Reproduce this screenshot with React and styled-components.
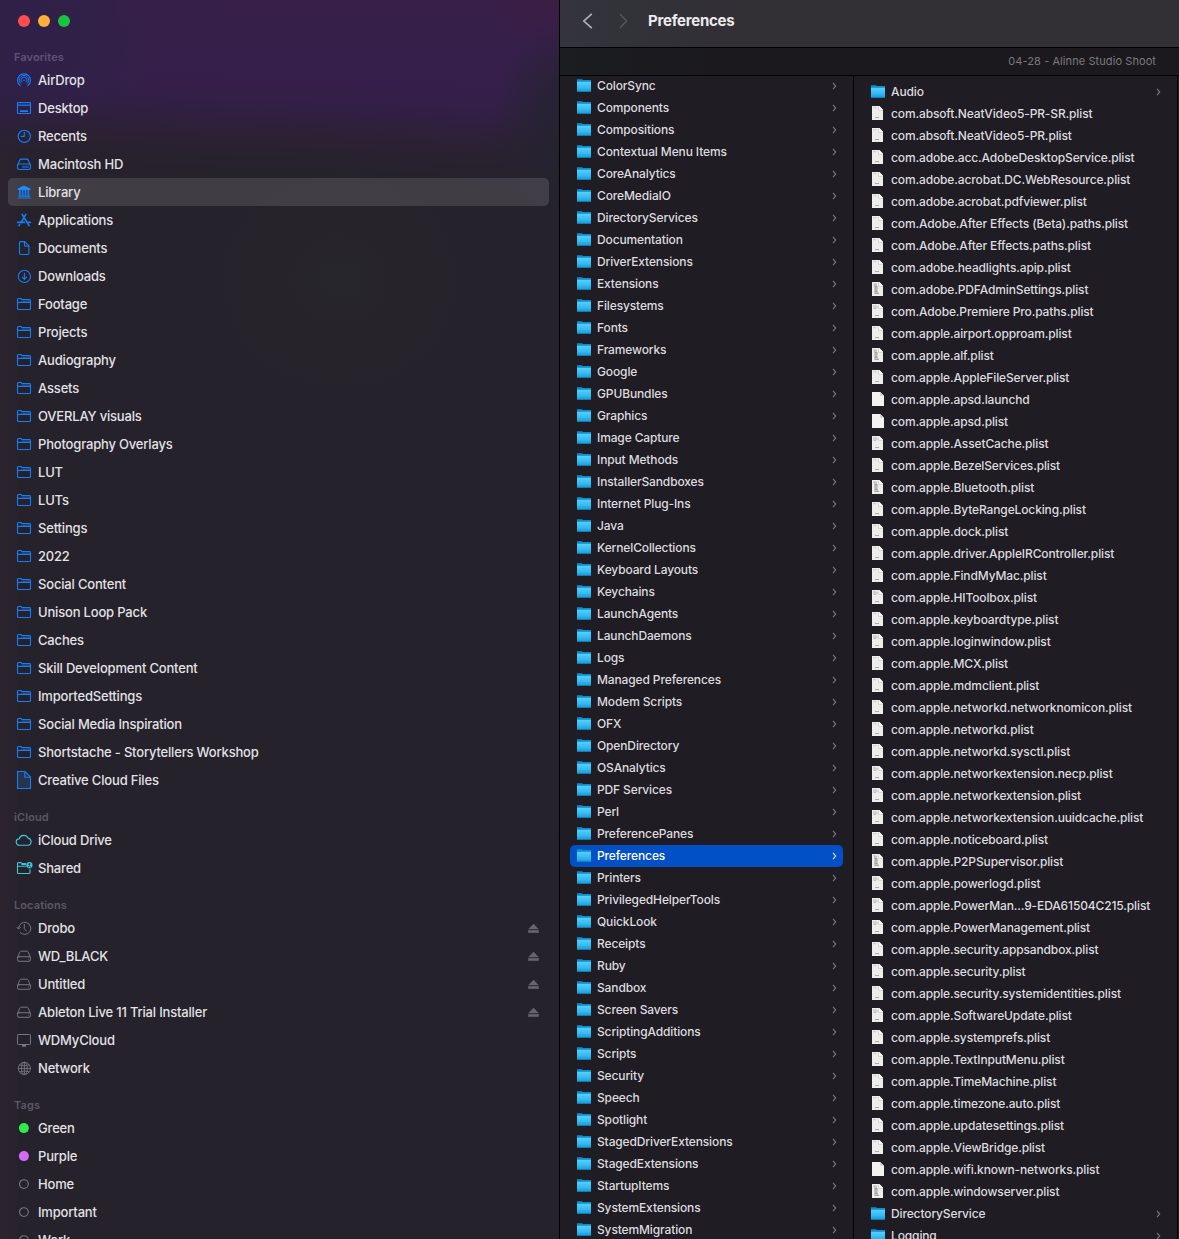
import React from "react";
import styled, { createGlobalStyle } from "styled-components";

const GlobalStyle = createGlobalStyle`
  * {
    box-sizing: border-box;
  }
  body {
    margin: 0;
    background-color: #1f1c24;
    font-family: Inter, "Liberation Sans", sans-serif;
    overflow: hidden;
  }
`;

const Window = styled.div`
  display: flex;
  width: 1179px;
  height: 1239px;
  overflow: hidden;
`;

const Sidebar = styled.div`
  width: 560px;
  height: 100%;
  flex-shrink: 0;
  overflow: hidden;
  border-right: 1px solid #000;
  background: radial-gradient(
      ellipse 85px 105px at 575px 125px,
      rgba(36, 35, 47, 0.95) 0%,
      rgba(36, 35, 47, 0.7) 45%,
      rgba(36, 35, 47, 0) 100%
    ),
    radial-gradient(
      ellipse 80px 50px at 559px 0,
      rgba(62, 29, 66, 0.8) 0%,
      rgba(62, 29, 66, 0) 100%
    ),
    radial-gradient(
      ellipse 170px 125px at 0 30px,
      rgba(43, 33, 70, 0.65) 0%,
      rgba(43, 33, 70, 0.5) 50%,
      rgba(43, 33, 70, 0) 100%
    ),
    linear-gradient(
      182deg,
      #371f49 0,
      #351f4a 95px,
      #321f45 118px,
      #2b2133 148px,
      rgba(38, 34, 43, 0) 185px
    ),
    radial-gradient(
      ellipse 120px 110px at 340px 280px,
      #27262c 0%,
      #26242a 60%,
      rgba(38, 36, 42, 0) 100%
    ),
    linear-gradient(to right, #2b232d 0, #2a232d 14px, #25222b 19px, #25222b 100%);
`;

const Lights = styled.div`
  display: flex;
  gap: 8px;
  height: 48px;
  padding: 15px 0 0 18px;
`;
const Light = styled.div`
  width: 12px;
  height: 12px;
  border-radius: 50%;
  background-color: ${(props) => props.color};
`;

const Section = styled.div`
  margin-bottom: 14px;
`;
const SectionTitle = styled.div`
  height: 18px;
  padding-left: 14px;
  line-height: 18px;
  font-size: 11px;
  font-weight: 600;
  letter-spacing: 0.1px;
  color: ${(props) => (props.$tinted ? "#62507a" : "#5b5862")};
`;
const SideRow = styled.div`
  display: flex;
  align-items: center;
  height: 28px;
  margin: 0 10px 0 8px;
  padding: 0 10px 0 8px;
  gap: 6px;
  border-radius: 5px;
  background-color: ${(props) =>
    props.$active ? "rgba(255, 255, 255, 0.125)" : "transparent"};
  color: ${(props) => props.$tone};

  svg {
    flex-shrink: 0;
    overflow: visible;
  }
`;
const SideLabel = styled.span`
  flex: 1;
  font-size: 13px;
  line-height: 16px;
  font-weight: 500;
  letter-spacing: -0.18px;
  color: #e3e1e5;
  white-space: nowrap;
`;

const Main = styled.div`
  display: flex;
  flex-direction: column;
  flex: 1;
  min-width: 0;
`;
const Toolbar = styled.div`
  display: flex;
  align-items: center;
  height: 48px;
  padding: 0 0 6px 22px;
  border-bottom: 1px solid #000;
  background: linear-gradient(to right, #33353d 0, #323239 60px, #322f35 190px);
`;
const NavButton = styled.div`
  width: ${(props) => props.$width}px;
  height: 16px;
  color: ${(props) => (props.$dim ? "#58565c" : "#b4b3b8")};
`;
const Title = styled.div`
  font-size: 15px;
  font-weight: 700;
  letter-spacing: -0.25px;
  color: #eceaed;
`;
const TabBar = styled.div`
  display: flex;
  align-items: center;
  justify-content: flex-end;
  height: 28px;
  padding: 0 23px 1px 0;
  border-bottom: 1px solid #000;
  background: linear-gradient(to right, #1b1d20 0, #1b191d 160px);
  font-size: 11px;
  letter-spacing: 0.08px;
  color: #7c7a7e;
`;

const Columns = styled.div`
  display: flex;
  flex: 1;
  min-height: 0;
  background-color: #1f1c24;
`;
const Column = styled.div`
  width: ${(props) => props.$width}px;
  flex-shrink: 0;
  overflow: hidden;
  padding: ${(props) => props.$top}px 10px 0;
  border-right: 1px solid #000;
`;
const ColumnList = styled.div`
  margin-top: ${(props) => props.$shift || 0}px;
`;
const FileRow = styled.div`
  display: flex;
  align-items: center;
  height: 22px;
  padding: 0 6px 0 7px;
  border-radius: 5px;
  background-color: ${(props) => (props.$active ? "#0250c5" : "transparent")};
  color: ${(props) => (props.$active ? "#c9dcf7" : "#77757b")};
`;
const FileName = styled.span`
  flex: 1;
  margin-left: 6px;
  padding-bottom: 1px;
  font-size: 12px;
  line-height: 15px;
  font-weight: ${(props) => (props.$active ? 500 : 450)};
  letter-spacing: -0.13px;
  color: ${(props) => (props.$active ? "#fff" : "#dddbdf")};
  white-space: nowrap;
`;
const FileThumb = styled.svg`
  width: 14px;
  height: 14px;
  margin-bottom: 2px;
`;

const BLUE = "#167df9";
const TEAL = "#3fc6dd";
const GREY = "#78757c";

const Svg = ({ children }) => (
  <svg
    width="16"
    height="16"
    viewBox="0 0 16 16"
    fill="none"
    stroke="currentColor"
    strokeWidth="1.1"
    strokeLinecap="round"
    strokeLinejoin="round"
  >
    {children}
  </svg>
);

const icons = {
  airdrop: (
    <Svg>
      <path d="M4.2 13.6A6.5 6.5 0 1 1 11.8 13.6" />
      <path d="M4.6 11.3A4.7 4.7 0 1 1 11.4 11.3" strokeWidth="1" />
      <path d="M5.8 9.9A2.9 2.9 0 1 1 10.2 9.9" strokeWidth="1" />
      <circle cx="8" cy="8.2" r="0.8" fill="currentColor" stroke="none" />
    </Svg>
  ),
  desktop: (
    <Svg>
      <rect x="1.5" y="2.5" width="13" height="11" rx="0.8" />
      <path d="M2 3.5H14V5.3H2Z" fill="currentColor" fillOpacity="0.45" stroke="none" />
      <path d="M1.5 5.5H14.5" strokeWidth="0.8" />
      <path d="M4 10.2H12V12H4Z" fill="currentColor" stroke="none" />
    </Svg>
  ),
  recents: (
    <Svg>
      <circle cx="8.3" cy="8.3" r="6.1" />
      <path d="M8.3 4.3V8.4H5.2" />
    </Svg>
  ),
  hd: (
    <Svg>
      <path d="M1.5 9.2L3.8 4Q4.2 3.1 5.2 3.1H10.8Q11.8 3.1 12.2 4L14.5 9.2" />
      <path d="M3.2 8H12.8Q14.5 8 14.5 9.7V11.8Q14.5 13.5 12.8 13.5H3.2Q1.5 13.5 1.5 11.8V9.7Q1.5 8 3.2 8Z" />
      <path d="M6 9.7H13V12.2H6Z" fill="currentColor" fillOpacity="0.5" stroke="none" />
    </Svg>
  ),
  drive: (
    <Svg>
      <path d="M1.5 9.6L3.8 4.1Q4.2 3.2 5.2 3.2H10.8Q11.8 3.2 12.2 4.1L14.5 9.6" strokeWidth="1" />
      <path d="M3 8.7H13Q14.5 8.7 14.5 10.2V11.8Q14.5 13.3 13 13.3H3Q1.5 13.3 1.5 11.8V10.2Q1.5 8.7 3 8.7Z" strokeWidth="1" />
      <circle cx="12.4" cy="11" r="0.6" fill="currentColor" stroke="none" />
    </Svg>
  ),
  library: (
    <Svg>
      <path d="M8 1.4L14.4 4.6V5.9H1.8V4.6Z" fill="#1c8bff" stroke="none" />
      <path d="M3.8 6V12M6.6 6V12M9.5 6V12M12.4 6V12" strokeWidth="1.6" strokeLinecap="butt" />
      <path d="M2.8 12.3H13.6M1.8 14H14.5" strokeWidth="1" />
    </Svg>
  ),
  apps: (
    <Svg>
      <path d="M6.2 2.4L13 13.6M9.8 2.4L4.9 10.6M3.6 12.7L3.1 13.6" strokeWidth="1.7" />
      <path d="M1.7 10.4H8.3M11.6 10.4H14.4" strokeWidth="1.7" />
    </Svg>
  ),
  doc: (
    <Svg>
      <path d="M4.6 1.6H8.7L12.9 5.8V13Q12.9 14.5 11.4 14.5H5Q3.5 14.5 3.5 13V2.7Q3.5 1.6 4.6 1.6Z" />
      <path d="M8.5 1.8V5.2Q8.5 6.1 9.4 6.1H12.7" />
    </Svg>
  ),
  downloads: (
    <Svg>
      <circle cx="8.4" cy="8.4" r="6.1" />
      <path d="M8.4 5.3V11.2M6.2 9.1L8.4 11.3L10.6 9.1" />
    </Svg>
  ),
  folder: (
    <Svg>
      <path d="M1.5 3.5Q1.5 2.5 2.5 2.5H5L6.2 3.5H13.5Q14.5 3.5 14.5 4.5V12.5Q14.5 13.5 13.5 13.5H2.5Q1.5 13.5 1.5 12.5Z" />
      <path d="M1.5 6.4H14.5" />
      <path d="M5.5 4H14V6H5.5Z" fill="currentColor" fillOpacity="0.35" stroke="none" />
    </Svg>
  ),
  ccfile: (
    <Svg>
      <path
        d="M1.5 -0.5H9L14.5 5V16.5H1.5Z"
        fill="#253450"
        strokeLinejoin="miter"
      />
      <path d="M8.8 -0.3V5.2H14.3" strokeLinejoin="miter" />
    </Svg>
  ),
  cloud: (
    <Svg>
      <path d="M3.6 13.3A3.2 3.2 0 0 1 3.2 6.9A4.7 4.7 0 0 1 12 6.1A3.7 3.7 0 0 1 12.4 13.3Z" />
    </Svg>
  ),
  shared: (
    <Svg>
      <path d="M9.6 3.6H6.2L5 2.6H2.5Q1.5 2.6 1.5 3.6V12.5Q1.5 13.5 2.5 13.5H13Q14 13.5 14 12.5V9.5" />
      <path d="M1.5 6.2H9.8M5.8 4.5H9.5" />
      <circle cx="13.4" cy="5.2" r="3.1" fill="currentColor" stroke="none" />
      <circle cx="13.4" cy="4.2" r="1" fill="#25222b" stroke="none" />
      <path d="M11.9 7Q13.4 5 14.9 7" stroke="#25222b" strokeWidth="0.8" />
    </Svg>
  ),
  timemachine: (
    <Svg>
      <path d="M2.6 8.2A6.1 6.1 0 1 1 4.3 12.6" strokeWidth="1" />
      <path d="M0.9 7.3L2.6 9.2L4.3 7.3" strokeWidth="0.9" />
      <path d="M8.3 4.6V8.6L10.2 11" strokeWidth="1" />
    </Svg>
  ),
  display: (
    <Svg>
      <rect x="1.5" y="2.5" width="13" height="10" rx="0.8" strokeWidth="1" />
      <path d="M6 13H10V14.8H6Z" fill="currentColor" stroke="none" />
    </Svg>
  ),
  network: (
    <Svg>
      <g strokeWidth="0.9">
        <circle cx="8.4" cy="8.4" r="6.1" />
        <ellipse cx="8.4" cy="8.4" rx="3" ry="6.1" />
        <path d="M8.4 2.3V14.5M2.3 8.4H14.5M3.7 5Q8.4 7 13.1 5M3.7 11.8Q8.4 9.8 13.1 11.8" />
      </g>
    </Svg>
  ),
  dot: (
    <Svg>
      <circle cx="7.9" cy="8.1" r="5" fill="currentColor" stroke="none" />
    </Svg>
  ),
  ring: (
    <Svg>
      <circle cx="7.9" cy="8.1" r="4.4" />
    </Svg>
  ),
};

const EjectIcon = () => (
  <svg width="11" height="10" viewBox="0 0 11 10" fill="#67646c">
    <path d="M5.5 0.8L10.8 6.2H0.2Z" />
    <rect x="0.2" y="7.2" width="10.6" height="2.6" />
  </svg>
);

const ChevronIcon = () => (
  <svg width="5" height="8" viewBox="0 0 5 8" fill="none">
    <path d="M1 0.9L3.7 4L1 7.1" stroke="currentColor" strokeWidth="1.2" />
  </svg>
);

const FolderIcon = () => (
  <svg width="14" height="14" viewBox="0 0 14 14">
    <defs>
      <linearGradient id="folderFace" x1="0" y1="0" x2="0" y2="1">
        <stop offset="0" stopColor="#55d0fb" />
        <stop offset="0.55" stopColor="#37bbf2" />
        <stop offset="1" stopColor="#149bd8" />
      </linearGradient>
    </defs>
    <path d="M0 0.2H5L6 1H14V4H0Z" fill="#0c8fce" />
    <rect x="0" y="2.8" width="14" height="9.8" fill="url(#folderFace)" />
    <rect x="0" y="12.1" width="14" height="0.8" fill="#0d84bf" />
  </svg>
);

const FileIcon = ({ kind }) => (
  <FileThumb viewBox="0 0 14 14">
    {kind === "blank" ? (
      <>
        <path d="M1 0H9.2L13 3.8V14H1Z" fill="#f2f2f2" />
        <path d="M9.2 0L13 3.8H9.2Z" fill="#cfcfcf" />
      </>
    ) : (
      <>
        <path d="M1 0H8.5L12 3.5V14H1Z" fill="#ededed" />
        <path d="M8 0L12 4H8Z" fill="#fbfbfb" />
        <path d="M7.6 0.6V4.4H11.8" fill="none" stroke="#c4c4c4" strokeWidth="0.6" />
        <rect x="4" y="11.2" width="4" height="0.8" fill="#9a9a9a" />
        <path d="M2.2 1.7H5.4" stroke="#c2c2c2" strokeWidth="0.8" />
      </>
    )}
    {kind === "mid" && (
      <path d="M2.2 3H6.8M2.6 4.4H5.2" stroke="#b8b8b8" strokeWidth="1" />
    )}
    {kind === "dense" && (
      <path
        d="M2.8 3H6M3.4 4.6H6.4M3.4 6.2H6.8M3.4 7.8H6.4M3.4 9.4H6.8M3 11H7.4"
        stroke="#a0a0a0"
        strokeWidth="1.2"
      />
    )}
  </FileThumb>
);

const favorites = [
  ["airdrop", "AirDrop"],
  ["desktop", "Desktop"],
  ["recents", "Recents"],
  ["hd", "Macintosh HD"],
  ["library", "Library"],
  ["apps", "Applications"],
  ["doc", "Documents"],
  ["downloads", "Downloads"],
  ["folder", "Footage"],
  ["folder", "Projects"],
  ["folder", "Audiography"],
  ["folder", "Assets"],
  ["folder", "OVERLAY visuals"],
  ["folder", "Photography Overlays"],
  ["folder", "LUT"],
  ["folder", "LUTs"],
  ["folder", "Settings"],
  ["folder", "2022"],
  ["folder", "Social Content"],
  ["folder", "Unison Loop Pack"],
  ["folder", "Caches"],
  ["folder", "Skill Development Content"],
  ["folder", "ImportedSettings"],
  ["folder", "Social Media Inspiration"],
  ["folder", "Shortstache - Storytellers Workshop"],
  ["ccfile", "Creative Cloud Files"],
];

const sections = [
  { title: "Favorites", tone: BLUE, items: favorites },
  {
    title: "iCloud",
    tone: TEAL,
    items: [
      ["cloud", "iCloud Drive"],
      ["shared", "Shared"],
    ],
  },
  {
    title: "Locations",
    tone: GREY,
    items: [
      ["timemachine", "Drobo", { eject: true }],
      ["drive", "WD_BLACK", { eject: true }],
      ["drive", "Untitled", { eject: true }],
      ["drive", "Ableton Live 11 Trial Installer", { eject: true }],
      ["display", "WDMyCloud"],
      ["network", "Network"],
    ],
  },
  {
    title: "Tags",
    tone: GREY,
    items: [
      ["dot", "Green", { tone: "#30e94b" }],
      ["dot", "Purple", { tone: "#d66bfb" }],
      ["ring", "Home"],
      ["ring", "Important"],
      ["ring", "Work"],
    ],
  },
];

const libraryFolders = [
  "ColorSync",
  "Components",
  "Compositions",
  "Contextual Menu Items",
  "CoreAnalytics",
  "CoreMediaIO",
  "DirectoryServices",
  "Documentation",
  "DriverExtensions",
  "Extensions",
  "Filesystems",
  "Fonts",
  "Frameworks",
  "Google",
  "GPUBundles",
  "Graphics",
  "Image Capture",
  "Input Methods",
  "InstallerSandboxes",
  "Internet Plug-Ins",
  "Java",
  "KernelCollections",
  "Keyboard Layouts",
  "Keychains",
  "LaunchAgents",
  "LaunchDaemons",
  "Logs",
  "Managed Preferences",
  "Modem Scripts",
  "OFX",
  "OpenDirectory",
  "OSAnalytics",
  "PDF Services",
  "Perl",
  "PreferencePanes",
  "Preferences",
  "Printers",
  "PrivilegedHelperTools",
  "QuickLook",
  "Receipts",
  "Ruby",
  "Sandbox",
  "Screen Savers",
  "ScriptingAdditions",
  "Scripts",
  "Security",
  "Speech",
  "Spotlight",
  "StagedDriverExtensions",
  "StagedExtensions",
  "StartupItems",
  "SystemExtensions",
  "SystemMigration",
];

const preferenceFiles = [
  ["Audio", "folder"],
  ["com.absoft.NeatVideo5-PR-SR.plist"],
  ["com.absoft.NeatVideo5-PR.plist"],
  ["com.adobe.acc.AdobeDesktopService.plist"],
  ["com.adobe.acrobat.DC.WebResource.plist"],
  ["com.adobe.acrobat.pdfviewer.plist"],
  ["com.Adobe.After Effects (Beta).paths.plist"],
  ["com.Adobe.After Effects.paths.plist"],
  ["com.adobe.headlights.apip.plist"],
  ["com.adobe.PDFAdminSettings.plist", "dense"],
  ["com.Adobe.Premiere Pro.paths.plist", "mid"],
  ["com.apple.airport.opproam.plist"],
  ["com.apple.alf.plist", "dense"],
  ["com.apple.AppleFileServer.plist"],
  ["com.apple.apsd.launchd", "blank"],
  ["com.apple.apsd.plist", "blank"],
  ["com.apple.AssetCache.plist", "mid"],
  ["com.apple.BezelServices.plist"],
  ["com.apple.Bluetooth.plist", "dense"],
  ["com.apple.ByteRangeLocking.plist"],
  ["com.apple.dock.plist"],
  ["com.apple.driver.AppleIRController.plist"],
  ["com.apple.FindMyMac.plist"],
  ["com.apple.HIToolbox.plist", "mid"],
  ["com.apple.keyboardtype.plist"],
  ["com.apple.loginwindow.plist", "mid"],
  ["com.apple.MCX.plist"],
  ["com.apple.mdmclient.plist"],
  ["com.apple.networkd.networknomicon.plist"],
  ["com.apple.networkd.plist"],
  ["com.apple.networkd.sysctl.plist"],
  ["com.apple.networkextension.necp.plist", "mid"],
  ["com.apple.networkextension.plist", "mid"],
  ["com.apple.networkextension.uuidcache.plist", "mid"],
  ["com.apple.noticeboard.plist"],
  ["com.apple.P2PSupervisor.plist", "dense"],
  ["com.apple.powerlogd.plist", "mid"],
  ["com.apple.PowerMan...9-EDA61504C215.plist", "mid"],
  ["com.apple.PowerManagement.plist", "mid"],
  ["com.apple.security.appsandbox.plist"],
  ["com.apple.security.plist"],
  ["com.apple.security.systemidentities.plist"],
  ["com.apple.SoftwareUpdate.plist", "mid"],
  ["com.apple.systemprefs.plist"],
  ["com.apple.TextInputMenu.plist"],
  ["com.apple.TimeMachine.plist"],
  ["com.apple.timezone.auto.plist"],
  ["com.apple.updatesettings.plist"],
  ["com.apple.ViewBridge.plist"],
  ["com.apple.wifi.known-networks.plist", "blank"],
  ["com.apple.windowserver.plist", "dense"],
  ["DirectoryService", "folder"],
  ["Logging", "folder"],
];

const App = () => {
  return (
    <Window>
      <GlobalStyle />
      <Sidebar>
        <Lights>
          <Light color="#fe4d4f" />
          <Light color="#feae3a" />
          <Light color="#1bc140" />
        </Lights>
        {sections.map((section) => (
          <Section key={section.title}>
            <SectionTitle $tinted={section.title === "Favorites"}>
              {section.title}
            </SectionTitle>
            {section.items.map(([icon, label, extra = {}]) => (
              <SideRow
                key={label}
                $active={label === "Library"}
                $tone={extra.tone || section.tone}
              >
                {icons[icon]}
                <SideLabel>{label}</SideLabel>
                {extra.eject && <EjectIcon />}
              </SideRow>
            ))}
          </Section>
        ))}
      </Sidebar>

      <Main>
        <Toolbar>
          <NavButton $width={37}>
            <svg width="11" height="16" viewBox="0 0 11 16" fill="none">
              <path d="M9.8 0.8L1.8 8L9.8 15.2" stroke="currentColor" strokeWidth="1.6" />
            </svg>
          </NavButton>
          <NavButton $width={29} $dim>
            <svg width="9" height="16" viewBox="0 0 9 16" fill="none">
              <path d="M1 1L7.6 8L1 15" stroke="currentColor" strokeWidth="1.4" />
            </svg>
          </NavButton>
          <Title>Preferences</Title>
        </Toolbar>
        <TabBar>04-28 - Alinne Studio Shoot</TabBar>
        <Columns>
          <Column $width={294} $top={0}>
            <ColumnList $shift={-1}>
              {libraryFolders.map((name) => (
                <FileRow key={name} $active={name === "Preferences"}>
                  <FolderIcon />
                  <FileName $active={name === "Preferences"}>{name}</FileName>
                  <ChevronIcon />
                </FileRow>
              ))}
            </ColumnList>
          </Column>
          <Column $width={324} $top={5}>
            <ColumnList>
              {preferenceFiles.map(([name, kind]) => (
                <FileRow key={name}>
                  {kind === "folder" ? <FolderIcon /> : <FileIcon kind={kind} />}
                  <FileName>{name}</FileName>
                  {kind === "folder" && <ChevronIcon />}
                </FileRow>
              ))}
            </ColumnList>
          </Column>
        </Columns>
      </Main>
    </Window>
  );
};

export default App;
